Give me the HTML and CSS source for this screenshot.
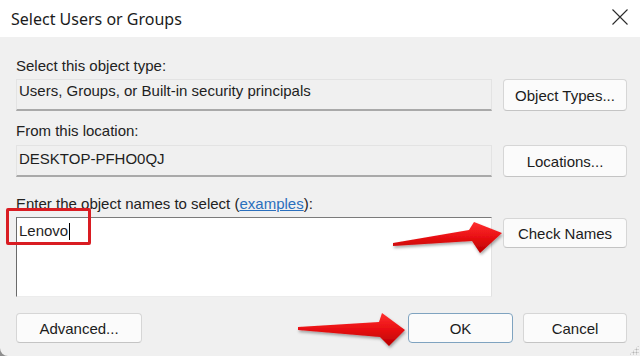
FILE: index.html
```html
<!DOCTYPE html>
<html>
<head>
<meta charset="utf-8">
<link rel="stylesheet" href="styles.css">
</head>
<body>
<div class="dialog">
  <div class="titlebar">
    <span class="title">Select Users or Groups</span>
    <span class="close">
      <svg width="16" height="16" viewBox="0 0 16 16"><path d="M0.5 0.5 L15.5 15.5 M15.5 0.5 L0.5 15.5" stroke="#2b2b2b" stroke-width="1.1" fill="none"/></svg>
    </span>
  </div>
  <div class="content">
    <div class="label l1">Select this object type:</div>
    <div class="row r1">
      <div class="field">Users, Groups, or Built-in security principals</div>
      <button class="btn">Object Types...</button>
    </div>
    <div class="label l2">From this location:</div>
    <div class="row r2">
      <div class="field">DESKTOP-PFHO0QJ</div>
      <button class="btn">Locations...</button>
    </div>
    <div class="label l3">Enter the object names to select (<a class="link">examples</a>):</div>
    <div class="row r3">
      <div class="textarea"><span class="typed">Lenovo</span><span class="caret"></span></div>
      <button class="btn check">Check Names</button>
    </div>
    <div class="row bottom">
      <button class="btn adv">Advanced...</button>
      <div class="spacer"></div>
      <button class="btn ok">OK</button>
      <button class="btn cancel">Cancel</button>
    </div>
    <div class="grip"></div>
  </div>
  <div class="highlight"></div>
  <svg class="arrows" width="640" height="356" viewBox="0 0 640 356">
    <defs>
      <linearGradient id="rg" x1="0" y1="0" x2="0" y2="1">
        <stop offset="0" stop-color="#ff3030"/>
        <stop offset="0.5" stop-color="#e80f12"/>
        <stop offset="1" stop-color="#b80000"/>
      </linearGradient>
      <filter id="sh" x="-10%" y="-30%" width="130%" height="170%">
        <feDropShadow dx="1" dy="2" stdDeviation="1.5" flood-color="#000" flood-opacity="0.35"/>
      </filter>
    </defs>
    <polygon filter="url(#sh)" fill="url(#rg)" points="393,243 469,230 474,222 502,233 480,253 472,241 393,246"/>
    <polygon filter="url(#sh)" fill="url(#rg)" points="298,327 379,322 382,313 405,330 389,346 380,337 298,330"/>
  </svg>
</div>
</body>
</html>
```

FILE: styles.css
```css
* { box-sizing: border-box; }
html, body { margin: 0; padding: 0; }
body {
  width: 640px;
  height: 356px;
  background: #8e8e8e;
  overflow: hidden;
  font-family: "Liberation Sans", Arial, sans-serif;
  font-size: 15px;
  color: #1f1f1f;
}
.dialog {
  position: relative;
  width: 640px;
  height: 356px;
  background: #f0f0f0;
  border-bottom-left-radius: 8px;
  overflow: hidden;
}
.titlebar {
  height: 37px;
  background: #ffffff;
  display: flex;
  align-items: center;
  justify-content: space-between;
  padding: 0 12px 0 11px;
}
.title {
  font-family: "Noto Sans", "Open Sans", sans-serif;
  font-size: 16px;
  color: #1b1b1b;
  margin-top: 0;
}
.close { display: flex; margin-top: -3px; }
.content {
  display: flex;
  flex-direction: column;
  padding: 20px 13px 0 16px;
}
.label { height: 17px; line-height: 17px; color: #222; white-space: nowrap; }
.l2 { margin-top: 11px; }
.l3 { margin-top: 18px; }
.link { color: #2a6fbd; text-decoration: underline; }
.row { display: flex; gap: 11px; align-items: flex-start; }
.r1 { margin-top: 5px; }
.r2 { margin-top: 6px; }
.r3 { margin-top: 5px; }
.field {
  width: 476px;
  height: 32px;
  background: #f0f0f0;
  border: 1px solid #e3e3e3;
  border-bottom: 2px solid #a9a9a9;
  padding: 2px 2px 0;
  line-height: 17px;
  color: #1e1e1e;
}
.r2 .field { padding-top: 4px; }
.btn {
  width: 124px;
  height: 32px;
  background: #fbfbfb;
  border: 1px solid #d6d6d6;
  border-bottom-color: #c4c4c4;
  border-radius: 4px;
  font-family: "Liberation Sans", Arial, sans-serif;
  font-size: 15px;
  color: #1c1c1c;
  padding: 0;
}
.textarea {
  width: 476px;
  height: 80px;
  background: #ffffff;
  border-top: 1px solid #7b7b7b;
  border-left: 1px solid #6a6a6a;
  border-right: 1px solid #e2e2e2;
  border-bottom: 1px solid #ececec;
  padding: 4px 2px 0;
  line-height: 17px;
  display: flex;
  align-items: flex-start;
}
.caret {
  display: inline-block;
  width: 1px;
  height: 17px;
  background: #000;
  margin-left: 1px;
  margin-top: 1px;
}
.check { margin-top: 1px; height: 30px; }
.bottom { margin-top: 16px; gap: 0; }
.bottom .btn { height: 30px; }
.adv { width: 126px; }
.spacer { flex: 1; }
.ok { width: 105px; border-color: #7fa3c0; margin-right: 10px; }
.cancel { width: 104px; }
.highlight {
  position: absolute;
  left: 6px;
  top: 208px;
  width: 85px;
  height: 37px;
  border: 3px solid #d91c22;
  border-radius: 2px;
}
.arrows { position: absolute; left: 0; top: 0; pointer-events: none; }
.grip {
  position: absolute;
  right: 1px;
  bottom: 1px;
  width: 10px;
  height: 10px;
  background:
    radial-gradient(circle, #b5b5b5 0.8px, transparent 1.2px) 0 0 / 3px 3px;
  clip-path: polygon(100% 0, 100% 100%, 0 100%);
}
```
